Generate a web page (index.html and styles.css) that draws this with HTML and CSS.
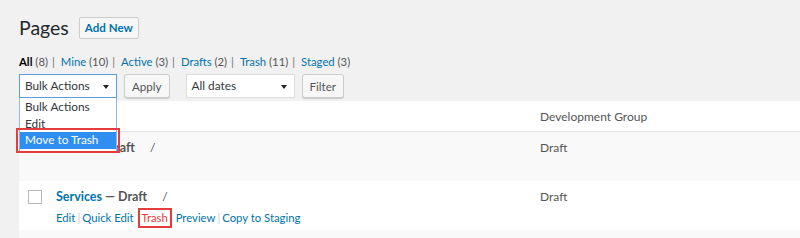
FILE: index.html
```html
<!DOCTYPE html>
<html lang="en">
<head>
    <meta charset="UTF-8">
    <title>Pages</title>
    <link rel="stylesheet" href="styles.css">
</head>
<body>
    <div class="wrap">
        <div class="page-head">
            <h1>Pages</h1>
            <a class="add-new" href="#">Add New</a>
        </div>

        <ul class="subsubsub">
            <li><a class="current" href="#">All</a> <span class="count">(8)</span><span class="sep">|</span></li>
            <li><a href="#">Mine</a> <span class="count">(10)</span><span class="sep">|</span></li>
            <li><a href="#">Active</a> <span class="count">(3)</span><span class="sep">|</span></li>
            <li><a href="#">Drafts</a> <span class="count">(2)</span><span class="sep">|</span></li>
            <li><a href="#">Trash</a> <span class="count">(11)</span><span class="sep">|</span></li>
            <li><a href="#">Staged</a> <span class="count">(3)</span></li>
        </ul>

        <div class="tablenav">
            <div class="bulk">
                <div class="select focused">Bulk Actions<span class="arrow"></span></div>
                <ul class="dropdown">
                    <li>Bulk Actions</li>
                    <li>Edit</li>
                    <li class="picked">Move to Trash</li>
                </ul>
            </div>
            <button class="button">Apply</button>
            <div class="select dates">All dates<span class="arrow"></span></div>
            <button class="button">Filter</button>
        </div>

        <table class="list">
            <thead>
                <tr>
                    <th class="cb"><span class="checkbox"></span></th>
                    <th class="title">Title</th>
                    <th class="group">Development Group</th>
                </tr>
            </thead>
            <tbody>
                <tr class="alt">
                    <td class="cb"></td>
                    <td class="title"><a class="row-title" href="#">Home</a> <span class="state">— Draft</span> <span class="slash">/</span></td>
                    <td class="group">Draft</td>
                </tr>
                <tr>
                    <td class="cb"><span class="checkbox"></span></td>
                    <td class="title">
                        <a class="row-title" href="#">Services</a> <span class="state">— Draft</span> <span class="slash">/</span>
                        <div class="row-actions">
                            <a href="#">Edit</a><span class="bar">|</span><a href="#">Quick Edit</a>
                            <a class="trash" href="#">Trash</a>
                            <a href="#">Preview</a><span class="bar">|</span><a href="#">Copy to Staging</a>
                        </div>
                    </td>
                    <td class="group">Draft</td>
                </tr>
                <tr class="alt">
                    <td class="cb"></td>
                    <td class="title"></td>
                    <td class="group"></td>
                </tr>
            </tbody>
        </table>
    </div>
</body>
</html>
```

FILE: styles.css
```css
body {
    margin: 0;
    background: #f1f1f1;
    font-family: Lato, sans-serif;
    color: #444;
    font-size: 12px;
    overflow: hidden;
}
a {
    color: #0073aa;
    text-decoration: none;
}
.wrap {
    padding-left: 19px;
}
.page-head {
    display: flex;
    align-items: center;
    gap: 10px;
    margin-top: 16px;
    height: 24px;
}
.page-head h1 {
    margin: 0;
    font-size: 19.5px;
    font-weight: 400;
    color: #23282d;
    line-height: 24px;
}
.add-new {
    display: inline-block;
    height: 20px;
    line-height: 20px;
    padding: 0 5px;
    border: 1px solid #ccc;
    border-radius: 2px;
    background: #f7f7f7;
    font-size: 11.6px;
    font-weight: 700;
}
.subsubsub {
    list-style: none;
    margin: 14px 0 0;
    padding: 0;
    display: flex;
    height: 16px;
    line-height: 16px;
    font-size: 11.3px;
}
.subsubsub .current {
    color: #000;
    font-weight: 700;
}
.subsubsub .count {
    color: #555;
}
.subsubsub .sep {
    color: #777;
    margin: 0 6px 0 4px;
}
.tablenav {
    display: flex;
    margin-top: 4px;
    height: 24px;
}
.bulk {
    position: relative;
}
.select {
    position: relative;
    box-sizing: border-box;
    width: 98px;
    height: 24px;
    line-height: 22px;
    padding-left: 5px;
    border: 1px solid #ddd;
    background: #fff;
    font-size: 11.8px;
    color: #32373c;
}
.select.focused {
    border-color: #5b9dd9;
}
.select.dates {
    width: 109px;
    margin-left: 16px;
}
.arrow {
    position: absolute;
    right: 7px;
    top: 10px;
    border-left: 3px solid transparent;
    border-right: 3px solid transparent;
    border-top: 4px solid #222;
}
.button {
    height: 24px;
    margin-left: 7px;
    padding: 0 7px;
    border: 1px solid #ccc;
    border-radius: 3px;
    background: #f7f7f7;
    box-shadow: 0 1px 0 #ccc;
    font-family: inherit;
    font-size: 11.6px;
    color: #555;
}
.dropdown {
    position: absolute;
    top: 24px;
    left: 0;
    z-index: 2;
    box-sizing: border-box;
    width: 98px;
    margin: 0;
    padding: 1px 0 2px;
    list-style: none;
    background: #fff;
    border: 1px solid #8fb8e6;
    border-top: none;
    font-size: 11.8px;
    color: #32373c;
}
.dropdown li {
    height: 16.5px;
    line-height: 16px;
    padding-left: 5px;
}
.dropdown .picked {
    background: #2f8ff0;
    color: #fff;
    outline: 2px solid #e53d3d;
    outline-offset: 2px;
}
.list {
    width: 100%;
    margin-top: 3px;
    border-collapse: collapse;
    background: #fff;
    font-size: 12px;
}
.list th {
    height: 30px;
    padding: 0;
    text-align: left;
    font-weight: 400;
    color: #32373c;
    border-bottom: 1px solid #e1e1e1;
}
.list td {
    height: 49px;
    padding: 8px 0 0;
    vertical-align: top;
    box-sizing: border-box;
}
.list tr.alt td {
    background: #f9f9f9;
}
.list .cb {
    width: 37px;
    padding-left: 9px;
    box-sizing: border-box;
}
.list td.cb {
    padding-top: 9px;
}
.list .title {
    width: 474px;
}
.list .group {
    padding-left: 10px;
    color: #555;
}
.checkbox {
    display: block;
    width: 12px;
    height: 12px;
    border: 1px solid #b4b9be;
    background: #fff;
}
.row-title {
    font-size: 12.5px;
    font-weight: 700;
}
.state {
    font-size: 12.5px;
    font-weight: 700;
    color: #555;
}
.slash {
    margin-left: 12px;
    color: #555;
}
.row-actions {
    margin-top: 4px;
    line-height: 16px;
    font-size: 11.3px;
}
.row-actions .bar {
    color: #ccc;
    margin: 0 2px;
}
.row-actions .trash {
    display: inline-block;
    margin: 0 1px;
    padding: 0 2px;
    line-height: 16px;
    border: 2px solid #e53d3d;
    color: #e8383d;
}
```
